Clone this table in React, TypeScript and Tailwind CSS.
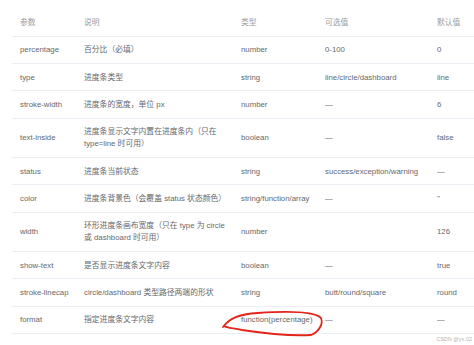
import React from "react";

type Row = { p: string; d: React.ReactNode; t: string; o: string; v: string; tall?: boolean };

const rows: Row[] = [
  { p: "percentage", d: "百分比（必填）", t: "number", o: "0-100", v: "0" },
  { p: "type", d: "进度条类型", t: "string", o: "line/circle/dashboard", v: "line" },
  { p: "stroke-width", d: "进度条的宽度，单位 px", t: "number", o: "—", v: "6" },
  {
    p: "text-inside",
    d: (
      <>
        进度条显示文字内置在进度条内（只在
        <br />
        type=line 时可用）
      </>
    ),
    t: "boolean",
    o: "—",
    v: "false",
    tall: true,
  },
  { p: "status", d: "进度条当前状态", t: "string", o: "success/exception/warning", v: "—" },
  { p: "color", d: "进度条背景色（会覆盖 status 状态颜色）", t: "string/function/array", o: "—", v: "''" },
  {
    p: "width",
    d: (
      <>
        环形进度条画布宽度（只在 type 为 circle
        <br />
        或 dashboard 时可用）
      </>
    ),
    t: "number",
    o: "",
    v: "126",
    tall: true,
  },
  { p: "show-text", d: "是否显示进度条文字内容", t: "boolean", o: "—", v: "true" },
  { p: "stroke-linecap", d: "circle/dashboard 类型路径两端的形状", t: "string", o: "butt/round/square", v: "round" },
  { p: "format", d: "指定进度条文字内容", t: "function(percentage)", o: "—", v: "—" },
];

const font = { fontFamily: '"Liberation Sans", "Noto Sans CJK SC", sans-serif' };

export default function App() {
  return (
    <div
      className="relative w-[474px] h-[345px] bg-white overflow-hidden text-[7.8px] leading-[11.4px] text-[#66686c]"
      style={font}
    >
      <div className="ml-[12px] mt-[10px]">
        <div className="grid h-[27px] grid-cols-[64px_157px_84px_112px_1fr] items-center border-b border-[#ebeef5] text-[#9a9ca1]">
          <div className="px-2 whitespace-nowrap">参数</div>
          <div className="px-2 whitespace-nowrap">说明</div>
          <div className="px-2 whitespace-nowrap">类型</div>
          <div className="px-2 whitespace-nowrap">可选值</div>
          <div className="px-2 whitespace-nowrap">默认值</div>
        </div>
        {rows.map((r) => (
          <div
            key={r.p}
            className={
              "grid grid-cols-[64px_157px_84px_112px_1fr] items-center border-b border-[#ebeef5] " +
              (r.tall ? "h-[39.6px]" : "h-[27.2px]")
            }
          >
            <div className="px-2 whitespace-nowrap">{r.p}</div>
            <div className="px-2 whitespace-nowrap">{r.d}</div>
            <div className="px-2 whitespace-nowrap">{r.t}</div>
            <div className="px-2 whitespace-nowrap">{r.o || "\u00a0"}</div>
            <div className="px-2 whitespace-nowrap">{r.v}</div>
          </div>
        ))}
      </div>
      <div className="absolute right-[2px] bottom-[2px] text-[5.5px] leading-[7px] text-[#b5b5b5]">
        CSDN @yx.02
      </div>
      <svg className="absolute left-0 top-0 pointer-events-none" width="474" height="345" viewBox="0 0 474 345">
        <path
          d="M223 327 C229 319, 238 314, 258 313 C288 311, 314 311, 321 318 C324 325, 317 333, 311 335 C292 336, 262 333, 242 330 C233 328, 227 328, 224 326"
          fill="none"
          stroke="#e3241b"
          strokeWidth="1.8"
          strokeLinecap="round"
        />
      </svg>
    </div>
  );
}
